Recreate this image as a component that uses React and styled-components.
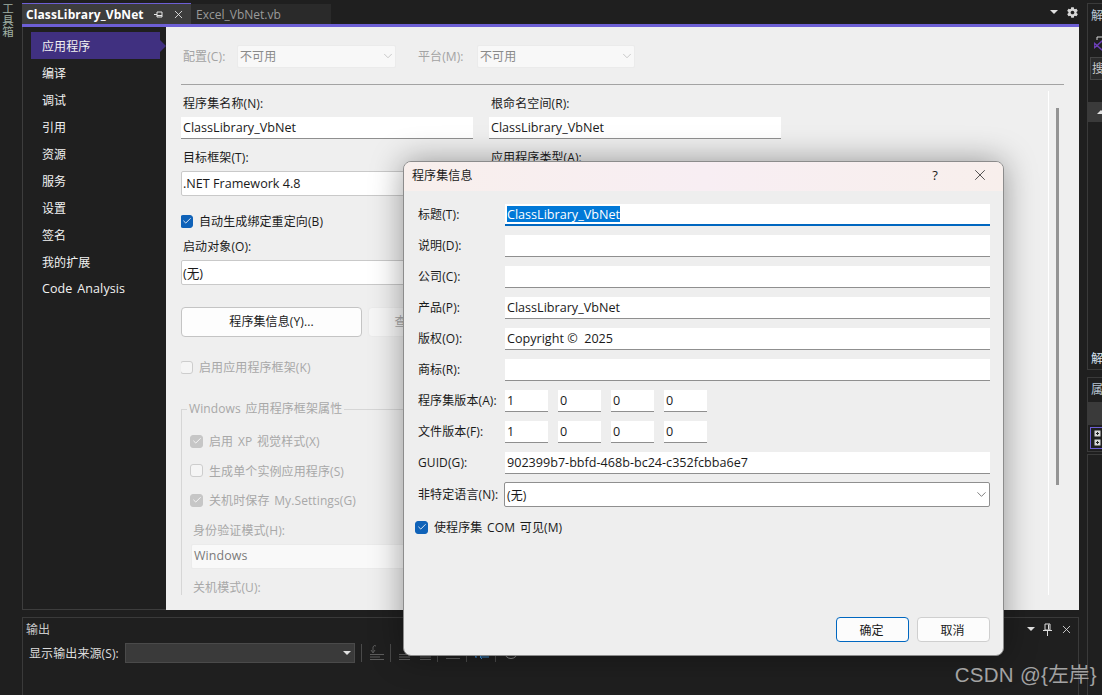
import React from 'react';
import styled, { createGlobalStyle } from 'styled-components';
import { Check, ChevronDown, X } from 'lucide-react';
import { IoMdSettings } from 'react-icons/io';

const GlobalStyle = createGlobalStyle`
  html, body {
    margin: 0;
    background: #1f1f1f;
    overflow: hidden;
  }
  * {
    box-sizing: border-box;
  }
`;

const uiFont = `"Open Sans", "Noto Sans CJK SC", sans-serif`;

const navItems = ['应用程序', '编译', '调试', '引用', '资源', '服务', '设置', '签名', '我的扩展', 'Code Analysis'];

const dialogRows = [
  { label: '标题(T):', value: 'ClassLibrary_VbNet', selected: true },
  { label: '说明(D):', value: '' },
  { label: '公司(C):', value: '' },
  { label: '产品(P):', value: 'ClassLibrary_VbNet' },
  { label: '版权(O):', value: 'Copyright ©  2025' },
  { label: '商标(R):', value: '' },
];

const App = () => {
  return (
    <Page>
      <GlobalStyle />
      <Rail>
        <RailLabel>工具箱</RailLabel>
      </Rail>

      <Center>
        <TabStrip>
          <ActiveTab>
            <TabTitle>ClassLibrary_VbNet</TabTitle>
            <PinIcon width="11" height="11" viewBox="0 0 11 11">
              <path d="M1 5.5h3M4 3v5h5V3zM4 6.5h5" fill="none" stroke="#e8e8e8" />
            </PinIcon>
            <X size={13} color="#e8e8e8" strokeWidth={1.6} />
          </ActiveTab>
          <InactiveTab>Excel_VbNet.vb</InactiveTab>
          <TabTools>
            <DownTriangle />
            <IoMdSettings size={13} color="#d8d8d8" />
          </TabTools>
        </TabStrip>
        <Accent />

        <Document>
          <Sidebar>
            {navItems.map((item, i) => (
              <NavItem key={item} $active={i === 0} $latin={item === 'Code Analysis'}>{item}</NavItem>
            ))}
          </Sidebar>

          <Panel>
            <ConfigBar>
              <ConfigLabel $width={56}>配置(C):</ConfigLabel>
              <ConfigSelect $width={159}>
                不可用
                <ChevronDown size={14} color="#b5b5b5" strokeWidth={1.2} />
              </ConfigSelect>
              <ConfigLabel $width={61} $gap={20}>平台(M):</ConfigLabel>
              <ConfigSelect $width={158}>
                不可用
                <ChevronDown size={14} color="#b5b5b5" strokeWidth={1.2} />
              </ConfigSelect>
            </ConfigBar>
            <Separator />

            <PanelBody>
              <ScrollArea>
                <TwoColumns>
                  <div>
                    <FieldLabel>程序集名称(N):</FieldLabel>
                    <Field>ClassLibrary_VbNet</Field>
                  </div>
                  <div>
                    <FieldLabel>根命名空间(R):</FieldLabel>
                    <Field>ClassLibrary_VbNet</Field>
                  </div>
                  <div>
                    <FieldLabel>目标框架(T):</FieldLabel>
                    <SelectBox>.NET Framework 4.8</SelectBox>
                  </div>
                  <div>
                    <FieldLabel>应用程序类型(A):</FieldLabel>
                    <SelectBox>类库</SelectBox>
                  </div>
                </TwoColumns>

                <CheckRow $top={16}>
                  <CheckBox $state="on"><Check size={10} color="#fff" strokeWidth={2} /></CheckBox>
                  自动生成绑定重定向(B)
                </CheckRow>

                <StartupBlock>
                  <FieldLabel>启动对象(O):</FieldLabel>
                  <SelectBox>(无)</SelectBox>
                </StartupBlock>

                <ButtonRow>
                  <WideButton>程序集信息(Y)...</WideButton>
                  <WideButton $disabled>查看 Windows 设置(W)</WideButton>
                </ButtonRow>

                <CheckRow $top={21} $muted>
                  <CheckBox $state="off" />
                  启用应用程序框架(K)
                </CheckRow>

                <GroupBox>
                  <GroupTitle>Windows 应用程序框架属性</GroupTitle>
                  <GroupChecks>
                    <CheckRow $muted>
                      <CheckBox $state="muted"><Check size={10} color="#fff" strokeWidth={2} /></CheckBox>
                      启用 XP 视觉样式(X)
                    </CheckRow>
                    <CheckRow $muted>
                      <CheckBox $state="off" />
                      生成单个实例应用程序(S)
                    </CheckRow>
                    <CheckRow $muted>
                      <CheckBox $state="muted"><Check size={10} color="#fff" strokeWidth={2} /></CheckBox>
                      关机时保存 My.Settings(G)
                    </CheckRow>
                  </GroupChecks>
                  <GroupLabel>身份验证模式(H):</GroupLabel>
                  <MutedSelect>Windows</MutedSelect>
                  <GroupLabel $top={10}>关机模式(U):</GroupLabel>
                </GroupBox>
              </ScrollArea>
              <ScrollTrack>
                <ScrollThumb />
              </ScrollTrack>
            </PanelBody>
          </Panel>
        </Document>

        <OutputPanel>
          <OutputHeader>
            <OutputTitle>输出</OutputTitle>
            <OutputTools>
              <DownTriangle />
              <svg width="11" height="13" viewBox="0 0 11 13">
                <path d="M3 1h5v6H3zM1 7.5h9M5.5 8v5M6.5 1.5v5" fill="none" stroke="#dcdcdc" />
              </svg>
              <X size={13} color="#dcdcdc" strokeWidth={1.6} />
            </OutputTools>
          </OutputHeader>
          <OutputToolbar>
            <OutputLabel>显示输出来源(S):</OutputLabel>
            <OutputSelect>
              <DownTriangle />
            </OutputSelect>
            <ToolSep />
            <svg width="14" height="18" viewBox="0 0 14 18">
              <path d="M3 8V3a2 2 0 0 1 3-1M1 6l2 3 2-3M0 10.500h14M0 13h10M0 15.500h14" fill="none" stroke="#5c5c5c" />
            </svg>
            <ToolSep />
            <svg width="32" height="18" viewBox="0 0 32 18">
              <path d="M0 10.500h11M0 13h11M0 15.500h11M21 10.500h11M21 13h11M21 15.500h11" fill="none" stroke="#5c5c5c" />
            </svg>
            <ToolSep />
            <svg width="14" height="18" viewBox="0 0 14 18">
              <path d="M0 10.500h14M0 14.500h14" fill="none" stroke="#5c5c5c" />
            </svg>
            <ToolSep />
            <svg width="14" height="18" viewBox="0 0 14 18">
              <path d="M0 10v3h2M14 13H5M7 11l-2 2 2 2" fill="none" stroke="#3d8fd8" />
            </svg>
            <ToolSep />
            <svg width="14" height="18" viewBox="0 0 14 18">
              <circle cx="7" cy="8" r="6.500" fill="none" stroke="#8a8a8a" />
            </svg>
          </OutputToolbar>
        </OutputPanel>
      </Center>

      <Dock>
        <SolutionPanel>
          <DockTitle>解</DockTitle>
          <svg width="12" height="15" viewBox="0 0 12 15">
            <path d="M3 1h7M3 1v3" fill="none" stroke="#d8d8d8" />
            <path d="M0 7v5l3-2.500zM3 9.500 8 5h3v9H8z" fill="none" stroke="#6b3fb5" strokeWidth="1.600" />
          </svg>
          <DockSearch>搜</DockSearch>
          <DockBand>
            <UpTriangle />
          </DockBand>
          <DockTitleBottom>解</DockTitleBottom>
        </SolutionPanel>
        <PropertyPanel>
          <DockTitle>属</DockTitle>
          <PropertyBand />
          <PropertyIcons>
            <svg width="12" height="16" viewBox="0 0 12 16">
              <path d="M.5.500h6v6h-6zM.5 9.500h6v6h-6z" fill="#d8d8d8" />
              <path d="M2 3.500h3M3.500 2v3M2 12.500h3M3.500 11v3" stroke="#222" />
              <path d="M8 2h4M8 5h4M8 11h4M8 14h4" stroke="#d8d8d8" />
            </svg>
          </PropertyIcons>
        </PropertyPanel>
        <DockRest />
      </Dock>

      <Dialog>
        <DialogTitleBar>
          <DialogTitle>程序集信息</DialogTitle>
          <DialogHelp>?</DialogHelp>
          <X size={18} color="#333" strokeWidth={1.1} />
        </DialogTitleBar>

        <DialogBody>
          {dialogRows.map((row) => (
            <DialogRow key={row.label}>
              <DialogLabel>{row.label}</DialogLabel>
              <DialogField $focused={row.selected}>
                {row.selected ? <Selection>{row.value}</Selection> : row.value}
              </DialogField>
            </DialogRow>
          ))}
          <DialogRow>
            <DialogLabel>程序集版本(A):</DialogLabel>
            <VersionFields>
              <VersionField>1</VersionField>
              <VersionField>0</VersionField>
              <VersionField>0</VersionField>
              <VersionField>0</VersionField>
            </VersionFields>
          </DialogRow>
          <DialogRow>
            <DialogLabel>文件版本(F):</DialogLabel>
            <VersionFields>
              <VersionField>1</VersionField>
              <VersionField>0</VersionField>
              <VersionField>0</VersionField>
              <VersionField>0</VersionField>
            </VersionFields>
          </DialogRow>
          <DialogRow>
            <DialogLabel>GUID(G):</DialogLabel>
            <DialogField>902399b7-bbfd-468b-bc24-c352fcbba6e7</DialogField>
          </DialogRow>
          <DialogRow>
            <DialogLabel>非特定语言(N):</DialogLabel>
            <DialogSelect>
              (无)
              <ChevronDown size={15} color="#555" strokeWidth={1.2} />
            </DialogSelect>
          </DialogRow>
          <DialogCheck>
            <CheckBox $state="on"><Check size={10} color="#fff" strokeWidth={2} /></CheckBox>
            使程序集 COM 可见(M)
          </DialogCheck>
        </DialogBody>

        <DialogFooter>
          <DialogButton $primary>确定</DialogButton>
          <DialogButton>取消</DialogButton>
        </DialogFooter>
      </Dialog>

      <Watermark>CSDN @{'{'}左岸{'}'}</Watermark>
    </Page>
  );
};

export default App;

const Page = styled.div`
  position: relative;
  display: flex;
  width: 1102px;
  height: 695px;
  overflow: hidden;
  background: #1f1f1f;
  font-family: ${uiFont};
  font-size: 12px;
  letter-spacing: 0.1px;
  word-spacing: 1.5px;
  color: #1a1a1a;
`;

const Rail = styled.div`
  width: 22px;
  flex-shrink: 0;
  padding-top: 3px;
`;

const RailLabel = styled.div`
  writing-mode: vertical-rl;
  width: 14px;
  font-size: 11.5px;
  line-height: 14px;
  letter-spacing: 0;
  color: #9fb0a4;
`;

const Center = styled.div`
  display: flex;
  flex-direction: column;
  width: 1057px;
  flex-shrink: 0;
`;

const TabStrip = styled.div`
  display: flex;
  align-items: flex-end;
  height: 24px;
`;

const ActiveTab = styled.div`
  display: flex;
  align-items: center;
  width: 169px;
  height: 21px;
  padding: 0 6px 0 4px;
  background: #3d3d3d;
  border-top: 1px solid #6d5fd5;
  color: #fff;
`;

const TabTitle = styled.span`
  font-weight: 700;
  font-size: 12px;
  flex: 1;
`;

const PinIcon = styled.svg`
  margin-right: 8px;
`;

const InactiveTab = styled.div`
  display: flex;
  align-items: center;
  width: 140px;
  height: 20px;
  padding-left: 5px;
  background: #2a2a2a;
  color: #9a9a9a;
  letter-spacing: 0;
`;

const TabTools = styled.div`
  display: flex;
  align-items: center;
  gap: 8px;
  margin-left: auto;
  height: 24px;
`;

const DownTriangle = styled.span`
  display: inline-block;
  width: 0;
  height: 0;
  border-left: 4px solid transparent;
  border-right: 4px solid transparent;
  border-top: 4px solid #e0e0e0;
`;

const UpTriangle = styled.span`
  display: inline-block;
  width: 0;
  height: 0;
  border-left: 4px solid transparent;
  border-right: 4px solid transparent;
  border-bottom: 4px solid #e0e0e0;
`;

const Accent = styled.div`
  height: 3px;
  background: #6d5fd5;
`;

const Document = styled.div`
  display: flex;
  height: 583px;
  border-left: 1px solid #3d3d3d;
`;

const Sidebar = styled.div`
  width: 143px;
  flex-shrink: 0;
  padding: 5px 0 0 8px;
  background: #1f1f1f;
  border-bottom: 1px solid #3d3d3d;
`;

const NavItem = styled.div`
  position: relative;
  display: flex;
  align-items: center;
  width: 129px;
  height: 27px;
  padding-left: 11px;
  color: #f2f2f2;
  font-size: ${(p) => (p.$latin ? '12.5px' : '12px')};
  background: ${(p) => (p.$active ? '#403080' : 'transparent')};

  ${(p) => p.$active && `
    &::after {
      content: '';
      position: absolute;
      top: 8px;
      right: -6px;
      border-top: 6px solid transparent;
      border-bottom: 6px solid transparent;
      border-left: 6px solid #403080;
    }
  `}
`;

const Panel = styled.div`
  flex: 1;
  display: flex;
  flex-direction: column;
  padding-left: 15px;
  background: #efefef;
  min-width: 0;
`;

const ConfigBar = styled.div`
  display: flex;
  align-items: center;
  margin-top: 18px;
  height: 23px;
`;

const ConfigLabel = styled.div`
  width: ${(p) => p.$width}px;
  margin-left: ${(p) => p.$gap || 0}px;
  padding-left: 2px;
  padding-bottom: 2px;
  color: #a3a3a3;
`;

const ConfigSelect = styled.div`
  display: flex;
  align-items: center;
  justify-content: space-between;
  width: ${(p) => p.$width}px;
  height: 23px;
  padding: 0 0 2px 2px;
  background: #f8f8f8;
  border: 1px solid #ebebeb;
  border-radius: 2px;
  color: #8a8a8a;
`;

const Separator = styled.div`
  height: 1px;
  margin: 16px 15px 0 0;
  background: #a3a3a3;
`;

const PanelBody = styled.div`
  display: flex;
  height: 504px;
  margin-top: 6px;
`;

const ScrollArea = styled.div`
  width: 868px;
  height: 504px;
  padding-top: 4px;
  overflow: hidden;
  border-right: 1px solid #fff;
`;

const ScrollTrack = styled.div`
  padding: 17px 0 0 7px;
`;

const ScrollThumb = styled.div`
  width: 3px;
  height: 377px;
  background: #949494;
`;

const TwoColumns = styled.div`
  display: grid;
  grid-template-columns: 292px 292px;
  column-gap: 16px;
  row-gap: 10px;
`;

const FieldLabel = styled.div`
  height: 18px;
  line-height: 18px;
  margin-bottom: 4px;
  padding-left: 2px;
`;

const Field = styled.div`
  display: flex;
  align-items: center;
  height: 22px;
  padding-left: 2px;
  background: #fff;
  border-bottom: 1px solid #8f8f8f;
  font-size: 12.6px;
  letter-spacing: 0;
  word-spacing: 0;
`;

const SelectBox = styled.div`
  display: flex;
  align-items: center;
  height: 25px;
  padding-left: 1px;
  background: #fff;
  border: 1px solid #c9c9c9;
  border-radius: 2px;
  font-size: 12.6px;
  letter-spacing: 0;
  word-spacing: 0;
`;

const CheckRow = styled.div`
  display: flex;
  align-items: center;
  gap: 6px;
  height: 18px;
  margin-top: ${(p) => p.$top || 0}px;
  margin-left: -1px;
  color: ${(p) => (p.$muted ? '#a8a8a8' : '#1a1a1a')};
`;

const checkBoxColors = {
  on: 'background: #0f62b8; border-color: #0f62b8;',
  off: 'background: #f5f5f5; border-color: #cdcdcd;',
  muted: 'background: #c6c6c6; border-color: #c6c6c6;',
};

const CheckBox = styled.span`
  display: flex;
  align-items: center;
  justify-content: center;
  width: 13px;
  height: 13px;
  flex-shrink: 0;
  border: 1px solid;
  border-radius: 3px;
  ${(p) => checkBoxColors[p.$state]}
`;

const StartupBlock = styled.div`
  width: 292px;
  margin-top: 8px;
`;

const ButtonRow = styled.div`
  display: flex;
  gap: 6px;
  margin-top: 22px;
`;

const WideButton = styled.div`
  display: flex;
  align-items: center;
  justify-content: center;
  width: 181px;
  height: 30px;
  padding-bottom: 2px;
  background: ${(p) => (p.$disabled ? '#f6f6f6' : '#fdfdfd')};
  border: 1px solid ${(p) => (p.$disabled ? '#ebebeb' : '#c4c4c4')};
  border-radius: 4px;
  color: ${(p) => (p.$disabled ? '#a8a8a8' : '#1a1a1a')};
`;

const GroupBox = styled.fieldset`
  width: 600px;
  margin: 24px 0 0;
  padding: 0 0 0 9px;
  border: 1px solid #d6d6d6;
  min-width: 0;
`;

const GroupTitle = styled.legend`
  padding: 0 2px;
  margin-left: -4px;
  line-height: 18px;
  color: #a8a8a8;
`;

const GroupChecks = styled.div`
  display: flex;
  flex-direction: column;
  gap: 11.5px;
  padding-top: 14px;
`;

const GroupLabel = styled.div`
  height: 18px;
  line-height: 18px;
  margin: ${(p) => p.$top ?? 13}px 0 4px 2px;
  color: #a8a8a8;
`;

const MutedSelect = styled.div`
  display: flex;
  align-items: center;
  height: 25px;
  width: 283px;
  padding: 0 0 2px 2px;
  background: #f9f9f9;
  border: 1px solid #ebebeb;
  border-radius: 2px;
  color: #7a7a7a;
  font-size: 12.4px;
`;

const OutputPanel = styled.div`
  flex: 1;
  margin-top: 7px;
  border: 1px solid #3a3a3a;
  border-bottom: none;
  display: flex;
  flex-direction: column;
`;

const OutputHeader = styled.div`
  display: flex;
  align-items: center;
  justify-content: space-between;
  height: 22px;
  padding: 0 5px 0 3px;
`;

const OutputTitle = styled.div`
  color: #c8c8c8;
`;

const OutputTools = styled.div`
  display: flex;
  align-items: center;
  gap: 7px;
`;

const OutputToolbar = styled.div`
  display: flex;
  align-items: center;
  gap: 8px;
  margin-top: 3px;
  height: 20px;
  padding-left: 6px;
`;

const OutputLabel = styled.div`
  width: 88px;
  flex-shrink: 0;
  color: #dcdcdc;
  white-space: nowrap;
`;

const OutputSelect = styled.div`
  display: flex;
  align-items: center;
  justify-content: flex-end;
  width: 230px;
  height: 20px;
  padding-right: 3px;
  background: #3a3a3a;
  border: 1px solid #4a4a4a;
`;

const ToolSep = styled.span`
  width: 1px;
  height: 18px;
  margin-left: -2px;
  background: #4a4a4a;
`;

const Dock = styled.div`
  display: flex;
  flex-direction: column;
  width: 15px;
  margin-left: 8px;
  flex-shrink: 0;
  overflow: hidden;
  color: #c8c8c8;
`;

const SolutionPanel = styled.div`
  height: 367px;
  margin-top: 3px;
  border: 1px solid #3a3a3a;
  border-right: none;
  display: flex;
  flex-direction: column;

  & > svg {
    margin: 8px 0 0 6px;
    flex-shrink: 0;
  }
`;

const DockTitle = styled.div`
  height: 24px;
  line-height: 24px;
  padding-left: 3px;
  white-space: nowrap;
  color: #b9c6d4;
`;

const DockTitleBottom = styled(DockTitle)`
  margin-top: auto;
  margin-bottom: -2px;
  color: #d8e2f0;
`;

const DockSearch = styled.div`
  height: 23px;
  line-height: 21px;
  margin: 6px 0 0 2px;
  padding-left: 1px;
  background: #2b2b2b;
  border: 1px solid #454545;
  border-right: none;
  white-space: nowrap;
`;

const DockBand = styled.div`
  display: flex;
  align-items: center;
  height: 20px;
  margin-top: 22px;
  padding-left: 9px;
  background: #3a3a3a;
`;

const PropertyPanel = styled.div`
  height: 75px;
  margin-top: 7px;
  border: 1px solid #3a3a3a;
  border-right: none;
  overflow: hidden;
`;

const PropertyBand = styled.div`
  height: 23px;
  background: #3a3a3a;
`;

const PropertyIcons = styled.div`
  height: 22px;
  margin: 2px 0 0 2px;
  padding: 2px 0 0 3px;
  border: 1px solid #6d5fd5;
  border-right: none;
`;

const DockRest = styled.div`
  flex: 1;
  border-left: 1px solid #3a3a3a;
  border-top: 1px solid #3a3a3a;
  margin-top: 2px;
`;

const Dialog = styled.div`
  position: absolute;
  left: 403px;
  top: 161px;
  display: flex;
  flex-direction: column;
  width: 601px;
  height: 495px;
  background: #eeeeee;
  border: 1px solid #8c8c8c;
  border-radius: 8px;
  box-shadow: 0 0 32px rgba(0, 0, 0, 0.38);
  overflow: hidden;
  color: #1a1a1a;
`;

const DialogTitleBar = styled.div`
  display: flex;
  align-items: center;
  height: 29px;
  flex-shrink: 0;
  padding: 0 14px 4px 8px;
  background: linear-gradient(90deg, #f8efec, #f8eef3 50%, #f8efec);
`;

const DialogTitle = styled.div`
  flex: 1;
`;

const DialogHelp = styled.div`
  margin-right: 33px;
  font-size: 13px;
`;

const DialogBody = styled.div`
  display: flex;
  flex-direction: column;
  gap: 9px;
  padding: 13px 13px 0 14px;
`;

const DialogRow = styled.div`
  display: flex;
  align-items: center;
`;

const DialogLabel = styled.div`
  width: 87px;
  flex-shrink: 0;
  padding-bottom: 2px;
  white-space: nowrap;
`;

const DialogField = styled.div`
  flex: 1;
  display: flex;
  align-items: center;
  height: 22px;
  padding-left: 2px;
  background: #fff;
  border-bottom: ${(p) => (p.$focused ? '2px solid #0067c0' : '1px solid #8f8f8f')};
  font-size: 12.6px;
  letter-spacing: 0;
  word-spacing: 0;
  white-space: pre;
`;

const Selection = styled.span`
  display: flex;
  align-items: center;
  height: 16px;
  background: #0078d7;
  color: #fff;
`;

const VersionFields = styled.div`
  display: flex;
  gap: 10px;
`;

const VersionField = styled.div`
  display: flex;
  align-items: center;
  width: 43px;
  height: 22px;
  padding-left: 2px;
  background: #fff;
  border-bottom: 1px solid #8f8f8f;
  font-size: 12.6px;
`;

const DialogSelect = styled.div`
  flex: 1;
  display: flex;
  align-items: center;
  justify-content: space-between;
  height: 25px;
  padding: 0 0 0 2px;
  margin-top: -1px;
  margin-left: -1px;
  background: #fff;
  border: 1px solid #8f8f8f;
  border-radius: 2px;
`;

const DialogCheck = styled.div`
  display: flex;
  align-items: center;
  gap: 6px;
  height: 18px;
  margin: 2px 0 0 -3px;
`;

const DialogFooter = styled.div`
  display: flex;
  justify-content: flex-end;
  gap: 8px;
  margin-top: auto;
  padding: 0 13px 13px 0;
`;

const DialogButton = styled.div`
  display: flex;
  align-items: center;
  justify-content: center;
  width: 73px;
  height: 25px;
  padding-right: 2px;
  background: #fcfcfc;
  border: 1px solid ${(p) => (p.$primary ? '#0067c0' : '#cfcfcf')};
  border-radius: 4px;
`;

const Watermark = styled.div`
  position: absolute;
  right: 5px;
  bottom: 7px;
  font-family: "Liberation Sans", "Noto Sans CJK SC", sans-serif;
  font-size: 20.5px;
  letter-spacing: 0.3px;
  word-spacing: 0;
  line-height: 26px;
  color: #a3a3a3;
  white-space: nowrap;
`;
